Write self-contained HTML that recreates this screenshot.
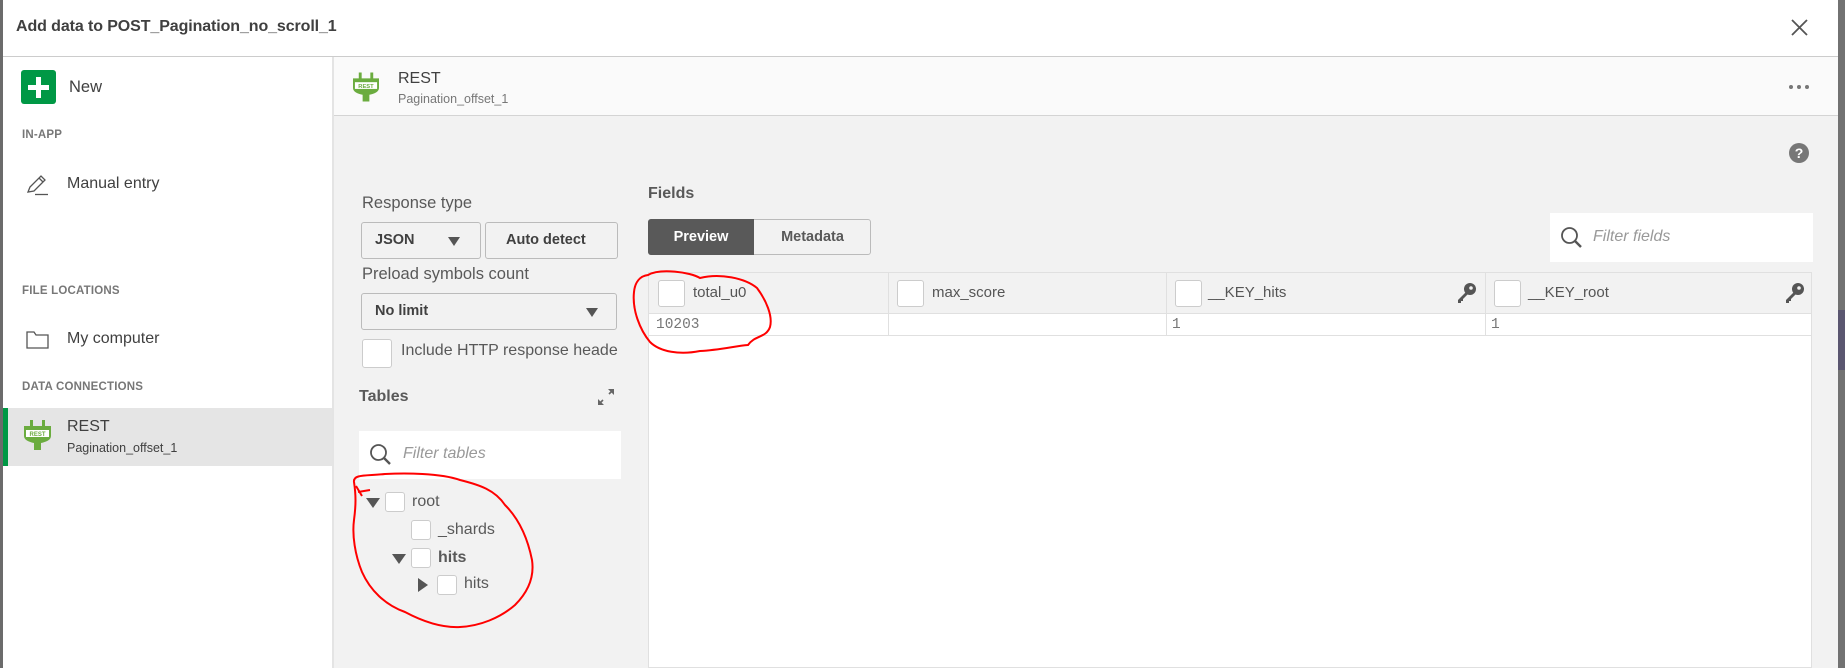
<!DOCTYPE html>
<html><head><meta charset="utf-8"><style>
*{box-sizing:border-box;margin:0;padding:0}
body{width:1845px;height:668px;overflow:hidden;background:#777;font-family:"Liberation Sans",sans-serif;color:#404040;position:relative}
.a{position:absolute}
.cb{position:absolute;width:20px;height:20px;background:#fff;border:1px solid #ccc;border-radius:3px}
.lbl{font-size:11.5px;font-weight:bold;color:#777;letter-spacing:.2px}
.side{font-size:16px;color:#404040}
.btn{position:absolute;border:1px solid #bbb;border-radius:3px;background:#f2f2f2;font-size:14.5px;font-weight:bold;color:#404040}
.th{font-size:15px;color:#555}
.tri{position:absolute;width:0;height:0}
</style></head><body>
<div class="a" style="left:0;top:0;width:3px;height:668px;background:#6b6b6b"></div>
<div class="a" style="left:1838px;top:0;width:7px;height:668px;background:#727272"></div>
<div class="a" style="left:1838px;top:310px;width:7px;height:60px;background:#5a5670"></div>
<div class="a" style="left:3px;top:0;width:1835px;height:668px;background:#fff"></div>
<div class="a" style="left:16px;top:18px;font-size:16px;font-weight:bold;color:#404040;letter-spacing:-.1px">Add data to POST_Pagination_no_scroll_1</div>
<svg class="a" style="left:1791px;top:19px" width="17" height="17" viewBox="0 0 17 17"><path d="M1 1L16 16M16 1L1 16" stroke="#555" stroke-width="1.8"/></svg>
<div class="a" style="left:3px;top:56px;width:1835px;height:1px;background:#ccc"></div>
<div class="a" style="left:332px;top:57px;width:2px;height:611px;background:#e4e4e4"></div>
<div class="a" style="left:21px;top:70px;width:35px;height:34px;background:#009845;border-radius:3px"></div>
<div class="a" style="left:28px;top:85px;width:21px;height:5px;background:#fff"></div>
<div class="a" style="left:36px;top:77px;width:5px;height:21px;background:#fff"></div>
<div class="a side" style="left:69px;top:78px;font-size:16.5px">New</div>
<div class="a lbl" style="left:22px;top:129px">IN-APP</div>
<svg class="a" style="left:26px;top:174px" width="24" height="22" viewBox="0 0 24 22"><path d="M2 18L4 13L15 2L19 6L8 17Z M13 4L17 8 M2 18L8 17" fill="none" stroke="#555" stroke-width="1.3"/><path d="M9 20.5H22" stroke="#555" stroke-width="1.3"/></svg>
<div class="a side" style="left:67px;top:175px">Manual entry</div>
<div class="a lbl" style="left:22px;top:285px">FILE LOCATIONS</div>
<svg class="a" style="left:26px;top:331px" width="23" height="18" viewBox="0 0 23 18"><path d="M1 1H8L10 4H22V17H1Z" fill="none" stroke="#555" stroke-width="1.3"/></svg>
<div class="a side" style="left:67px;top:330px">My computer</div>
<div class="a lbl" style="left:22px;top:381px">DATA CONNECTIONS</div>
<div class="a" style="left:3px;top:408px;width:329px;height:58px;background:#e5e5e5"></div>
<div class="a" style="left:3px;top:408px;width:5px;height:58px;background:#009845"></div>
<svg class="a" style="left:24px;top:420px" width="27" height="30" viewBox="0 0 27 30"><path d="M6 0h3v6h9V0h3v6h6v10c0 4-5 6-10 7v7h-7v-7C5 22 0 20 0 16V6h6z" fill="#6bac3f"/><rect x="2" y="10" width="23" height="7" fill="#fff"/><text x="13.5" y="16" font-size="6" font-weight="bold" fill="#6bac3f" text-anchor="middle" font-family="Liberation Sans">REST</text></svg>
<div class="a side" style="left:67px;top:418px">REST</div>
<div class="a" style="left:67px;top:441px;font-size:12.5px;color:#404040">Pagination_offset_1</div>
<div class="a" style="left:334px;top:57px;width:1504px;height:611px;background:#f2f2f2"></div>
<div class="a" style="left:334px;top:57px;width:1504px;height:59px;background:#fafafa;border-bottom:1px solid #d4d4d4"></div>
<svg class="a" style="left:353px;top:72px" width="26" height="30" viewBox="0 0 27 30"><path d="M6 0h3v6h9V0h3v6h6v10c0 4-5 6-10 7v7h-7v-7C5 22 0 20 0 16V6h6z" fill="#6bac3f"/><rect x="2" y="10" width="23" height="7" fill="#fff"/><text x="13.5" y="16" font-size="6" font-weight="bold" fill="#6bac3f" text-anchor="middle" font-family="Liberation Sans">REST</text></svg>
<div class="a" style="left:398px;top:70px;font-size:16px;color:#404040">REST</div>
<div class="a" style="left:398px;top:92px;font-size:12.5px;color:#777">Pagination_offset_1</div>
<div class="a" style="left:1789px;top:85px;width:4px;height:4px;border-radius:2px;background:#777;box-shadow:8px 0 #777,16px 0 #777"></div>
<div class="a" style="left:1789px;top:143px;width:20px;height:20px;border-radius:10px;background:#777;color:#fff;font-size:14px;font-weight:bold;text-align:center;line-height:20px">?</div>
<div class="a" style="left:362px;top:194px;font-size:16.5px;color:#595959">Response type</div>
<div class="btn" style="left:361px;top:222px;width:120px;height:37px"><span class="a" style="left:13px;top:9px">JSON</span><span class="tri" style="left:86px;top:14px;border-left:6px solid transparent;border-right:6px solid transparent;border-top:9px solid #555"></span></div>
<div class="btn" style="left:485px;top:222px;width:133px;height:37px"><span class="a" style="left:20px;top:9px">Auto detect</span></div>
<div class="a" style="left:362px;top:265px;font-size:16.5px;color:#595959">Preload symbols count</div>
<div class="btn" style="left:361px;top:293px;width:256px;height:37px"><span class="a" style="left:13px;top:9px">No limit</span><span class="tri" style="left:224px;top:14px;border-left:6px solid transparent;border-right:6px solid transparent;border-top:9px solid #555"></span></div>
<div class="cb" style="left:362px;top:339px;width:30px;height:29px"></div>
<div class="a" style="left:401px;top:342px;font-size:16px;color:#595959;white-space:nowrap;width:218px;overflow:hidden">Include HTTP response heade</div>
<div class="a" style="left:359px;top:388px;font-size:16px;font-weight:bold;color:#595959">Tables</div>
<svg class="a" style="left:595px;top:386px" width="22" height="22" viewBox="0 0 22 22"><path d="M13 3h6v6z M9 19H3v-6z" fill="#666"/><path d="M18 4l-4 4M4 18l4-4" stroke="#666" stroke-width="1.6"/></svg>
<div class="a" style="left:359px;top:431px;width:262px;height:48px;background:#fff"></div>
<svg class="a" style="left:369px;top:443px" width="24" height="24" viewBox="0 0 24 24"><circle cx="9.5" cy="9.5" r="7.5" fill="none" stroke="#555" stroke-width="1.8"/><path d="M15 15l6 6" stroke="#555" stroke-width="2.4"/></svg>
<div class="a" style="left:403px;top:445px;font-size:16px;font-style:italic;color:#999">Filter tables</div>
<span class="tri" style="left:366px;top:498px;border-left:7px solid transparent;border-right:7px solid transparent;border-top:10px solid #555"></span>
<div class="cb" style="left:385px;top:492px"></div>
<div class="a" style="left:412px;top:493px;font-size:16px;color:#595959">root</div>
<div class="cb" style="left:411px;top:520px"></div>
<div class="a" style="left:438px;top:521px;font-size:16px;color:#595959">_shards</div>
<span class="tri" style="left:392px;top:554px;border-left:7px solid transparent;border-right:7px solid transparent;border-top:10px solid #555"></span>
<div class="cb" style="left:411px;top:548px"></div>
<div class="a" style="left:438px;top:549px;font-size:16px;font-weight:bold;color:#595959">hits</div>
<span class="tri" style="left:418px;top:578px;border-top:7px solid transparent;border-bottom:7px solid transparent;border-left:10px solid #555"></span>
<div class="cb" style="left:437px;top:575px"></div>
<div class="a" style="left:464px;top:575px;font-size:16px;color:#595959">hits</div>
<div class="a" style="left:648px;top:185px;font-size:16px;font-weight:bold;color:#595959">Fields</div>
<div class="a" style="left:648px;top:219px;width:223px;height:36px;border:1px solid #bbb;border-radius:3px;background:#f2f2f2"></div>
<div class="a" style="left:648px;top:219px;width:106px;height:36px;background:#595959;border-radius:3px 0 0 3px;color:#fff;font-size:14.5px;font-weight:bold;text-align:center;line-height:36px">Preview</div>
<div class="a" style="left:754px;top:219px;width:117px;height:36px;font-size:14.5px;font-weight:bold;text-align:center;line-height:36px;color:#595959">Metadata</div>
<div class="a" style="left:1550px;top:213px;width:263px;height:49px;background:#fff"></div>
<svg class="a" style="left:1560px;top:226px" width="24" height="24" viewBox="0 0 24 24"><circle cx="9.5" cy="9.5" r="7.5" fill="none" stroke="#555" stroke-width="1.8"/><path d="M15 15l6 6" stroke="#555" stroke-width="2.4"/></svg>
<div class="a" style="left:1593px;top:228px;font-size:16px;font-style:italic;color:#999">Filter fields</div>
<div class="a" style="left:648px;top:272px;width:1164px;height:396px;background:#fff;border:1px solid #e0e0e0"></div>
<div class="a" style="left:649px;top:273px;width:1162px;height:41px;background:#f2f2f2;border-bottom:1px solid #e0e0e0"></div>
<div class="a" style="left:649px;top:335px;width:1162px;height:1px;background:#e0e0e0"></div>
<div class="a" style="left:888px;top:273px;width:1px;height:63px;background:#e0e0e0"></div>
<div class="a" style="left:1166px;top:273px;width:1px;height:63px;background:#e0e0e0"></div>
<div class="a" style="left:1485px;top:273px;width:1px;height:63px;background:#e0e0e0"></div>
<div class="cb" style="left:658px;top:280px;width:27px;height:27px"></div>
<div class="a th" style="left:693px;top:284px">total_u0</div>
<div class="cb" style="left:897px;top:280px;width:27px;height:27px"></div>
<div class="a th" style="left:932px;top:284px">max_score</div>
<div class="cb" style="left:1175px;top:280px;width:27px;height:27px"></div>
<div class="a th" style="left:1208px;top:284px">__KEY_hits</div>
<div class="cb" style="left:1494px;top:280px;width:27px;height:27px"></div>
<div class="a th" style="left:1528px;top:284px">__KEY_root</div>
<svg class="a" style="left:1455px;top:282px" width="22" height="22" viewBox="0 0 22 22"><circle cx="15" cy="7" r="6" fill="#555"/><circle cx="16" cy="6" r="1.8" fill="#f2f2f2"/><path d="M11 10L3 18v3h3v-2h2v-2l5-5" fill="#555"/></svg>
<svg class="a" style="left:1783px;top:282px" width="22" height="22" viewBox="0 0 22 22"><circle cx="15" cy="7" r="6" fill="#555"/><circle cx="16" cy="6" r="1.8" fill="#f2f2f2"/><path d="M11 10L3 18v3h3v-2h2v-2l5-5" fill="#555"/></svg>
<div class="a" style="left:656px;top:317px;font-family:'Liberation Mono',monospace;font-size:14.5px;color:#777">10203</div>
<div class="a" style="left:1172px;top:317px;font-family:'Liberation Mono',monospace;font-size:14.5px;color:#777">1</div>
<div class="a" style="left:1491px;top:317px;font-family:'Liberation Mono',monospace;font-size:14.5px;color:#777">1</div>
<svg class="a" style="left:0;top:0" width="1845" height="668" viewBox="0 0 1845 668">
<path d="M648 275C660 268 690 272 700 278C720 273 745 278 757 288C766 300 773 316 770 327C766 338 755 335 748 345C735 346 720 350 700 351C680 355 660 352 650 342C640 330 632 310 634 292C635 282 640 276 648 275Z" fill="none" stroke="#f00" stroke-width="2"/>
<path d="M354 482C353 474 366 476 385 474C405 473 440 473 460 480C480 485 495 490 505 505C520 520 528 540 532 560C535 580 525 595 515 605C500 618 480 626 460 627C440 628 420 620 405 612C385 605 370 590 362 572C355 555 352 535 354 520C356 505 356 495 354 482Z M356 486L362 496 M358 492L370 490" fill="none" stroke="#f00" stroke-width="2"/>
</svg>
</body></html>
